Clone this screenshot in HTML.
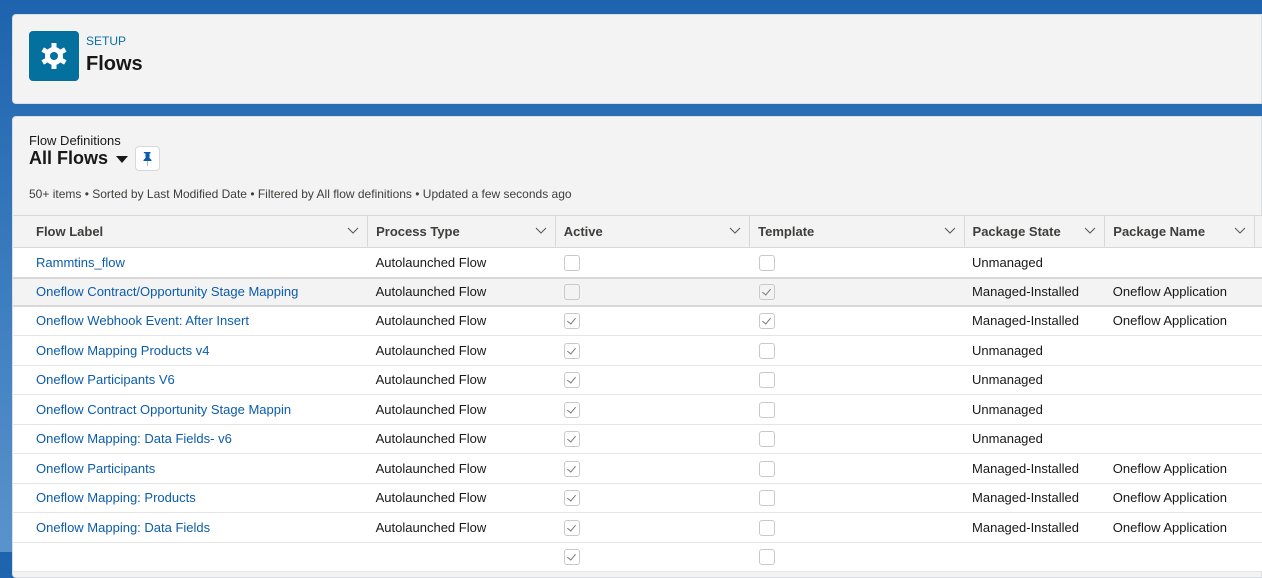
<!DOCTYPE html>
<html><head><style>
body{margin:0;width:1262px;height:552px;overflow:hidden;font-family:"Liberation Sans",sans-serif;background:linear-gradient(180deg,#1d63ad 0%,#2f72b8 30%,#5a93cc 100%);position:relative}
.card{position:absolute;left:12px;right:0;background:#f3f3f3;border-radius:4px 0 0 4px;border:1px solid #d8dde6}
.icon{position:absolute;left:16px;top:16px;width:50px;height:50px;background:#04709e;border-radius:4px}
.t{position:absolute;white-space:nowrap}
table{position:absolute;left:0;top:98px;border-collapse:collapse;width:1250px;font-size:13px;color:#181818}
th{height:31px;text-align:left;font-weight:bold;color:#3e3e3c;padding:0 0 0 8px;border-right:1px solid #d8d8d8;border-top:1px solid #d8d8d8;border-bottom:1px solid #d8d8d8;position:relative;background:#f3f3f3}
th svg{position:absolute;right:8px;top:11px}
td{height:28.5px;padding:0 0 0 8px;border-bottom:1px solid #e5e5e5;background:#fff}
td.l{padding-left:23px;color:#0b5cab}
tr.g td{background:#f3f3f3;border-bottom:2px solid #d8d8d8;border-top:2px solid #d8d8d8;height:26px}
.cb{display:inline-block;width:14px;height:14px;border:1px solid #c9c9c9;border-radius:3px;background:#fff;vertical-align:middle;position:relative;margin-left:1px}
.cb.c::after{content:"";position:absolute;left:4px;top:2px;width:4px;height:7px;border:solid #777;border-width:0 1.3px 1.3px 0;transform:rotate(40deg)}
</style></head><body>
<div class="card" style="top:14px;height:88px">
<div class="icon"><svg width="50" height="50" viewBox="0 0 50 50"><g fill="#fff"><circle cx="25" cy="25" r="9"/><g stroke="#fff" stroke-width="5"><line x1="25" y1="12" x2="25" y2="38"/><line x1="13.7" y1="18.5" x2="36.3" y2="31.5"/><line x1="13.7" y1="31.5" x2="36.3" y2="18.5"/></g></g><circle cx="25" cy="25" r="4" fill="#04709e"/></svg></div>
<div class="t" style="left:73px;top:19px;font-size:12px;color:#0b6fa8">SETUP</div>
<div class="t" style="left:73px;top:38px;font-size:20px;font-weight:bold;color:#181818">Flows</div>
</div>
<div class="card" style="top:116px;height:460px">
<div class="t" style="left:16px;top:16px;font-size:13px;color:#181818">Flow Definitions</div>
<div class="t" style="left:16px;top:31px;font-size:18px;font-weight:bold;color:#181818">All Flows <svg width="14" height="10" style="margin-left:2px"><path d="M1 2h12L7 9z" fill="#181818"/></svg></div>
<div style="position:absolute;left:122px;top:29px;width:23px;height:23px;background:#fff;border:1px solid #d8d8d8;border-radius:4px"><svg width="23" height="23" viewBox="0 0 23 23"><path d="M8 5h7v1.5h-1v4.5l2 2v1h-3.8v5h-0.4v-5H8v-1l2-2V6.5H9z" fill="#0b5cab" transform="translate(-0.5,0)"/></svg></div>
<div class="t" style="left:16px;top:70px;font-size:12px;color:#3e3e3c">50+ items • Sorted by Last Modified Date • Filtered by All flow definitions • Updated a few seconds ago</div>
<table>
<tr><th style="padding-left:23px;width:332px">Flow Label<svg width="12" height="8"><path d="M1 1l5 5 5-5" stroke="#555" fill="none"/></svg></th>
<th style="width:179px">Process Type<svg width="12" height="8"><path d="M1 1l5 5 5-5" stroke="#555" fill="none"/></svg></th>
<th style="width:186px">Active<svg width="12" height="8"><path d="M1 1l5 5 5-5" stroke="#555" fill="none"/></svg></th>
<th style="width:206px">Template<svg width="12" height="8"><path d="M1 1l5 5 5-5" stroke="#555" fill="none"/></svg></th>
<th style="width:132px">Package State<svg width="12" height="8"><path d="M1 1l5 5 5-5" stroke="#555" fill="none"/></svg></th>
<th style="width:141px">Package Name<svg width="12" height="8"><path d="M1 1l5 5 5-5" stroke="#555" fill="none"/></svg></th>
<th style="border-right:none"></th></tr>
<tr><td class="l">Rammtins_flow</td><td>Autolaunched Flow</td><td><span class="cb"></span></td><td><span class="cb"></span></td><td>Unmanaged</td><td></td><td></td></tr>
<tr class="g"><td class="l">Oneflow Contract/Opportunity Stage Mapping</td><td>Autolaunched Flow</td><td><span class="cb" style="background:#f3f3f3"></span></td><td><span class="cb c" style="background:#f3f3f3"></span></td><td>Managed-Installed</td><td>Oneflow Application</td><td></td></tr>
<tr><td class="l">Oneflow Webhook Event: After Insert</td><td>Autolaunched Flow</td><td><span class="cb c"></span></td><td><span class="cb c"></span></td><td>Managed-Installed</td><td>Oneflow Application</td><td></td></tr>
<tr><td class="l">Oneflow Mapping Products v4</td><td>Autolaunched Flow</td><td><span class="cb c"></span></td><td><span class="cb"></span></td><td>Unmanaged</td><td></td><td></td></tr>
<tr><td class="l">Oneflow Participants V6</td><td>Autolaunched Flow</td><td><span class="cb c"></span></td><td><span class="cb"></span></td><td>Unmanaged</td><td></td><td></td></tr>
<tr><td class="l">Oneflow Contract Opportunity Stage Mappin</td><td>Autolaunched Flow</td><td><span class="cb c"></span></td><td><span class="cb"></span></td><td>Unmanaged</td><td></td><td></td></tr>
<tr><td class="l">Oneflow Mapping: Data Fields- v6</td><td>Autolaunched Flow</td><td><span class="cb c"></span></td><td><span class="cb"></span></td><td>Unmanaged</td><td></td><td></td></tr>
<tr><td class="l">Oneflow Participants</td><td>Autolaunched Flow</td><td><span class="cb c"></span></td><td><span class="cb"></span></td><td>Managed-Installed</td><td>Oneflow Application</td><td></td></tr>
<tr><td class="l">Oneflow Mapping: Products</td><td>Autolaunched Flow</td><td><span class="cb c"></span></td><td><span class="cb"></span></td><td>Managed-Installed</td><td>Oneflow Application</td><td></td></tr>
<tr><td class="l">Oneflow Mapping: Data Fields</td><td>Autolaunched Flow</td><td><span class="cb c"></span></td><td><span class="cb"></span></td><td>Managed-Installed</td><td>Oneflow Application</td><td></td></tr>
<tr><td class="l"></td><td></td><td><span class="cb c"></span></td><td><span class="cb"></span></td><td></td><td></td><td></td></tr>
</table>
</div>
</body></html>
